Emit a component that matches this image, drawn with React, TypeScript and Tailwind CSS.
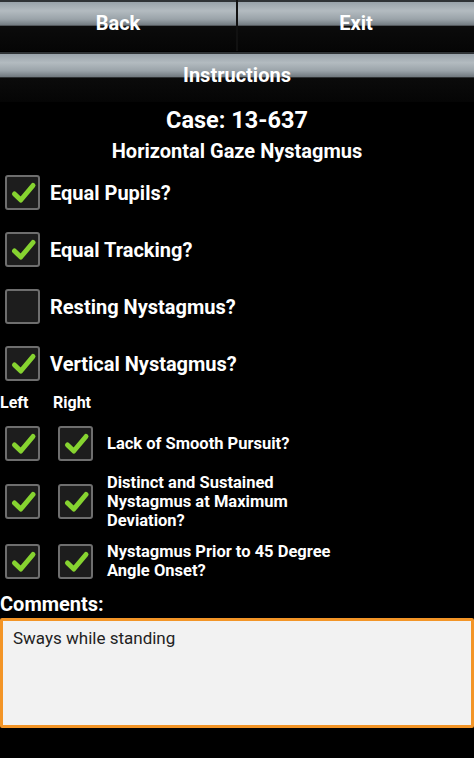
import React from 'react';

const FONT = { fontFamily: 'Roboto, "Liberation Sans", sans-serif' };

const MAIN_ITEMS = [
  { label: 'Equal Pupils?', checked: true },
  { label: 'Equal Tracking?', checked: true },
  { label: 'Resting Nystagmus?', checked: false },
  { label: 'Vertical Nystagmus?', checked: true },
];

const SIDE_ITEMS = [
  { label: ['Lack of Smooth Pursuit?'], height: 'h-[58px]' },
  { label: ['Distinct and Sustained', 'Nystagmus at Maximum', 'Deviation?'], height: 'h-[58px]' },
  { label: ['Nystagmus Prior to 45 Degree', 'Angle Onset?'], height: 'h-[62px]' },
];

function CheckBox({ checked }: { checked: boolean }) {
  return (
    <div className="w-[35px] h-[35px] shrink-0 rounded-[3px] border-2 border-[#6e6e6e] bg-[#1d1d1d]">
      {checked && (
        <svg width="31" height="31" viewBox="0 0 31 31">
          <polyline
            points="7.5,17 13.8,23 26,8.5"
            fill="none"
            stroke="#86d330"
            strokeWidth="5"
            strokeLinecap="round"
            strokeLinejoin="round"
          />
        </svg>
      )}
    </div>
  );
}

function BarButton({ label }: { label: string }) {
  return (
    <button className="flex-1 h-full flex items-center justify-center pb-[7px] text-white text-[20px] font-bold border-t-2 border-[#2e3235] bg-[linear-gradient(to_bottom,#98a2a9_0%,#b3bbc0_18%,#9aa3a9_35%,#737b81_47%,#0b0b0b_50%,#050505_100%)]">
      {label}
    </button>
  );
}

export default function App() {
  return (
    <div className="w-full h-[758px] bg-black text-white overflow-hidden" style={FONT}>
      <div className="flex gap-[2px] h-[51px] bg-[#111]">
        <BarButton label="Back" />
        <BarButton label="Exit" />
      </div>
      <div className="mt-[1px] h-[50px] flex">
        <BarButton label="Instructions" />
      </div>

      <div className="mt-[4px] text-center text-[23.5px] leading-[28px] font-bold">Case: 13-637</div>
      <div className="mt-[5px] text-center text-[20px] leading-[24px] font-bold">Horizontal Gaze Nystagmus</div>

      <div className="mt-[1px]">
        {MAIN_ITEMS.map((item) => (
          <div key={item.label} className="h-[57px] flex items-center gap-[10px] pl-[5px]">
            <CheckBox checked={item.checked} />
            <span className="text-[20px] font-bold">{item.label}</span>
          </div>
        ))}
      </div>

      <div className="h-[22px] flex items-center text-[16px] font-bold">
        <span className="w-[53px]">Left</span>
        <span>Right</span>
      </div>

      {SIDE_ITEMS.map((item) => (
        <div key={item.label[0]} className={`${item.height} flex items-center pl-[5px]`}>
          <CheckBox checked />
          <div className="ml-[18px]">
            <CheckBox checked />
          </div>
          <div className="ml-[14px] text-[16.5px] leading-[19px] font-bold">
            {item.label.map((line) => (
              <div key={line}>{line}</div>
            ))}
          </div>
        </div>
      ))}

      <div className="h-[24px] flex items-center text-[20px] font-bold">Comments:</div>
      <div className="mt-[2px] h-[110px] border-[3px] border-[#f39527] rounded-[2px] bg-[#f2f2f2] px-[10px] pt-[7px] text-[17px] leading-[20px] text-[#222]">
        Sways while standing
      </div>
    </div>
  );
}
